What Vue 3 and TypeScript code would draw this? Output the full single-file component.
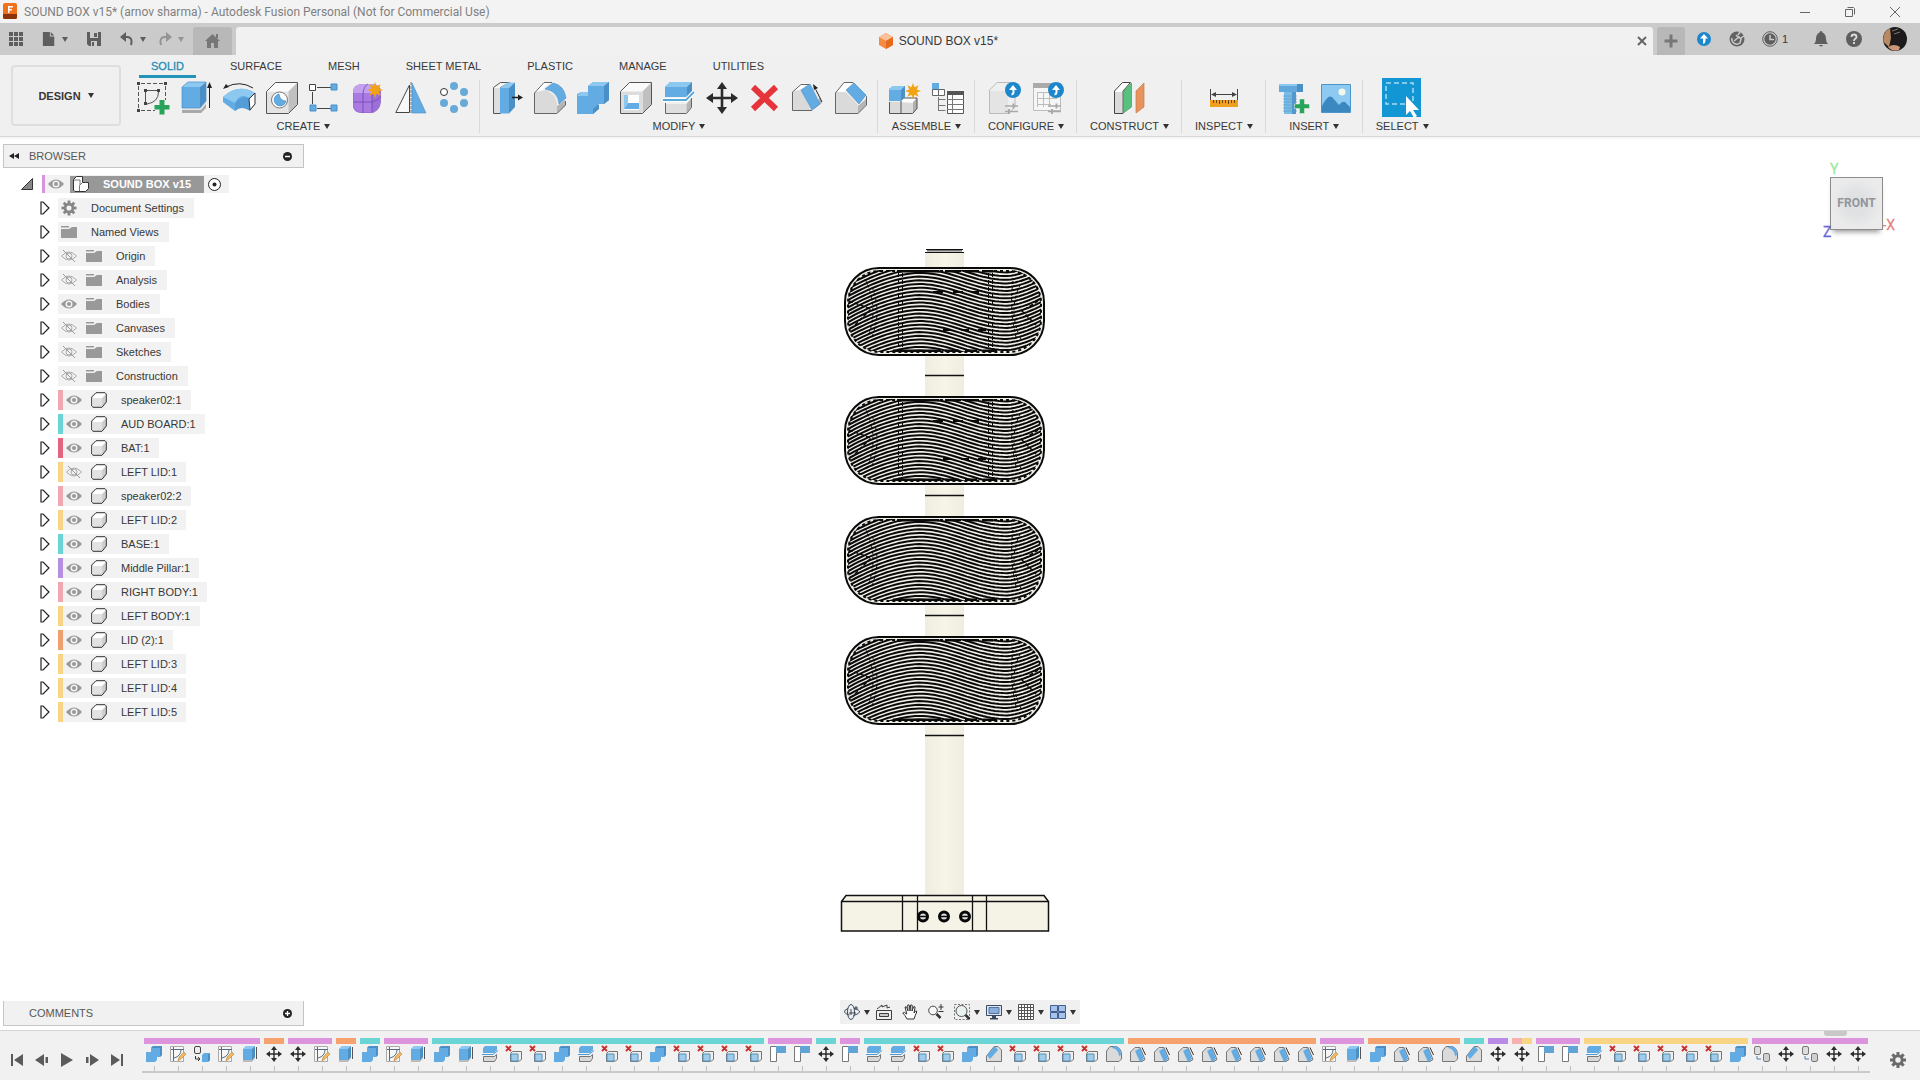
<script setup lang="ts">
import { ref } from 'vue'

const blue = '#62abe3'
const light = '#8cc8f0'
const deep = '#4a8fc6'

const star = (x: number, y: number, r: number): string => {
  const pts: string[] = []
  for (let i = 0; i < 16; i++) {
    const a = (Math.PI * i) / 8
    const q = i % 2 ? r * 0.5 : r
    pts.push(`${(x + q * Math.sin(a)).toFixed(1)},${(y - q * Math.cos(a)).toFixed(1)}`)
  }
  return `<polygon points="${pts.join(' ')}" fill="#f3a312"/>`
}

const gearPath = (c: number, r: number): string => {
  let teeth = ''
  for (let i = 0; i < 8; i++) {
    teeth += `<rect x="${c - r * 0.19}" y="${c - r}" width="${r * 0.38}" height="${r * 0.5}" transform="rotate(${i * 45} ${c} ${c})"/>`
  }
  return `${teeth}<circle cx="${c}" cy="${c}" r="${r * 0.52}" fill="none" stroke-width="${r * 0.36}" stroke="currentColor"/>`
}

const arrowUp = '<circle cx="24" cy="8" r="8" fill="#1d87cc"/><path d="M24 3l4 5h-2.500v2q0 3-3 3.500v-2q1-.5 1-1.500v-2H20z" fill="#fff"/>'
const sliders = '<path d="M16 24h13M16 29.500h13" stroke="#a9a9a9" stroke-width="1.500"/><path d="M24.500 21.500v5M20 27v5" stroke="#a9a9a9" stroke-width="2"/>'

const icons: Record<string, string> = {
  sketch: `<path d="M4 1.500h22M1.500 4v22M28.500 4v14M4 28.500h14" stroke="#555" stroke-dasharray="4 2" fill="none"/><g fill="#444"><path d="M0 0h3v3H0zM27 0h3v3h-3zM0 27h3v3H0zM7 7h3v3H7zM20 7h3v3h-3zM7 20h3v3H7z"/></g><path d="M10 8.500h10M8.500 10v10M21.500 10q0 10-11.500 12" fill="none" stroke="#555"/><path d="M22.500 18h5v5h5v4.500h-5v5h-5v-5h-5V23h5z" fill="#28a35a"/>`,
  extrude: `<path d="M2 26v5h19l5-5v-4z" fill="#a9a9a9"/><path d="M2 24v4h19l5-6v-3z" fill="#e5e5e5"/><path d="M2 5h18v21H2z" fill="${blue}"/><path d="M2 5l6-5h18l-6 5z" fill="${light}"/><path d="M20 5l6-5v19l-6 7z" fill="${deep}"/><path d="M2 5l6-5h18v19l-6 7H2z" fill="none" stroke="#4a8fc6" stroke-width=".7"/><path d="M29.500 26V5" stroke="#222"/><path d="M29.500 0l2.500 6h-5z" fill="#222"/>`,
  sweep: `<path d="M0 15q15-14 32-4v11l-5 7q-9-6-15 0L0 20z" fill="${blue}"/><path d="M0 15q15-14 32-4l-6 5q-9-6-14 5z" fill="${light}"/><path d="M12 21q7-8 14-5v12q-8-5-14 1z" fill="#559dd6"/><path d="M26 17l6-6v11l-5 6z" fill="#fff" stroke="#333"/><path d="M3 5q14-7 27 1" fill="none" stroke="#222"/><path d="M0 7l3-5 3 3z" fill="#222"/>`,
  hole: `<path d="M.5 9.500h22v22H.5z" fill="#e4e4e4"/><path d="M.5 9.500l9-9h22l-9 9z" fill="#fafafa"/><path d="M22.500 9.500l9-9v22l-9 9z" fill="#c0c0c0"/><path d="M.5 9.500l9-9h22v22l-9 9H.5z" fill="none" stroke="#555"/><circle cx="13.500" cy="18" r="8" fill="#fff" stroke="#777"/><path d="M13 12a6 6 0 1 0 7 7q-6 0-7-7z" fill="${blue}" stroke="#3d84bd" stroke-width=".6"/>`,
  pattern: `<path d="M8 5.500h14M8 26.500h14M3.500 10v12" stroke="#444"/><path d="M.5 2.500h6v6h-6z" fill="#fff" stroke="#444"/><path d="M22 2h6v6h-6zM1 23h6v6H1zM22 23h6v6h-6z" fill="${blue}" stroke="#4a8fc6"/>`,
  form: `<path d="M1 10Q1 3 9 2h12q8 1 8 8v10q-1 8-8 11H8q-6-1-7-6z" fill="#9a6fd6"/><path d="M1 10Q1 3 9 2h12q5 1 7 4-6 1-8 5H2z" fill="#c3a1ee"/><path d="M2 11h18v19H8q-5-1-6-5z" fill="#a97ae2"/><path d="M11 11V31M2 20h18q7-2 9-6M20 11v19M11 11q1-7 5-9" stroke="#7346ae" fill="none" stroke-width=".8"/>${star(23, 8, 8)}`,
  mirror: `<path d="M.8 30.500L14.500 3v27.500z" fill="#f8f8f8" stroke="#444"/><path d="M17 1l14 30H17z" fill="${blue}" stroke="#4a8fc6" stroke-width=".6"/><path d="M16 0v32" stroke="#777" stroke-dasharray="3 1"/>`,
  circular: `<g fill="#68a9d8"><circle cx="16" cy="4" r="4"/><circle cx="26" cy="10" r="4"/><circle cx="26" cy="21" r="4"/><circle cx="16" cy="27" r="4"/><circle cx="6" cy="21" r="4"/></g><circle cx="6" cy="10" r="3.500" fill="#fff" stroke="#333"/>`,
  presspull: `<path d="M2.500 5.500l7-5h9l-9 5v26h-7z" fill="#f7f7f7" stroke="#555"/><path d="M3 6h7v25H3z" fill="#dedede"/><path d="M9 6h9v25.500H9z" fill="${blue}"/><path d="M9 6l7-5.500h8L18 6z" fill="${light}"/><path d="M18 6l6-5.500V25l-6 6.500z" fill="${deep}"/><path d="M21 15.500h6" stroke="#222" stroke-width="1.500"/><path d="M32 15.500l-5-3v6z" fill="#222"/>`,
  fillet: `<path d="M.5 10L9 .5h8q-8 4-9 9.500z" fill="#fff"/><path d="M.5 31.500V10L12 8q10 4 11 14v9.500z" fill="#dadada"/><path d="M23 24l8-6v6l-8 7.500z" fill="#b5b5b5"/><path d="M23 31.500H.5V11L10 .5h8M31.500 19v4L23 31.500" fill="none" stroke="#666"/><path d="M11 7l8-6q11 2 13 15l-7 6Q24 9 11 7z" fill="${blue}" stroke="#4a8fc6" stroke-width=".6"/>`,
  combine: `<path d="M0 12l4-2h7V4l5-4h16v18l-5 4h-6v5l-5 5H0z" fill="${blue}"/><path d="M11 4l5-4h16l-5 4zM0 14l4-4h7v4z" fill="${light}"/><path d="M27 4l5-4v18l-5 4zM16 27l6-5v5l-6 5z" fill="${deep}"/>`,
  shell: `<path d="M.5 9.500l9-9h22v22l-9 9H.5z" fill="#fafafa"/><path d="M22.500 9.500l9-9v22l-9 9z" fill="#c0c0c0"/><path d="M.5 9.500h22v22H.5z" fill="#dcdcdc"/><path d="M4 13h15v15H4z" fill="#fff"/><path d="M4 13h4v8l-4 6z" fill="#8cc8f0"/><path d="M4 27l4-6h11v6z" fill="${blue}"/><path d="M.5 9.500l9-9h22v22l-9 9H.5z" fill="none" stroke="#555"/>`,
  split: `<path d="M2 5l5-5h22l-5 5v10H2z" fill="${blue}"/><path d="M2 5l5-5h22l-5 5z" fill="${light}"/><path d="M24 5l5-5v9l-5 6z" fill="${deep}"/><path d="M2.500 22h21v9h-21z" fill="#dedede"/><path d="M23.500 22l5-6v9l-5 6z" fill="#b5b5b5"/><path d="M2.500 21v10.500h21l5-6V16" fill="none" stroke="#666"/><path d="M0 18h23l8-8" fill="none" stroke="#fff" stroke-width="4"/><path d="M0 18h23l8-8" fill="none" stroke="#58a8e0" stroke-width="1.800"/>`,
  move: `<path d="M16 4v24M4 16h24" stroke="#2b2b2b" stroke-width="2.600"/><path d="M16 0l5 7H11zM16 32l5-7H11zM0 16l7-5v10zM32 16l-7-5v10z" fill="#2b2b2b"/>`,
  remove: `<path d="M4 5l23 22M27 5L4 27" stroke="#e5343a" stroke-width="6"/>`,
  draft: `<path d="M.5 10L9 1.500h8l-7 5z" fill="#fff"/><path d="M.5 28.500V9l9-1 10 20.500z" fill="#dadada"/><path d="M20 28.500L30 21l-2-6z" fill="#b5b5b5"/><path d="M20 28.500H.5V10L9 2.500h8" fill="none" stroke="#666"/><path d="M9 8l9-6 10 20-8 6z" fill="${blue}" stroke="#4a8fc6" stroke-width=".6"/><path d="M30 20L22.500 5" stroke="#222" stroke-dasharray="14 1"/><path d="M21 2l5 4-4 2z" fill="#222"/>`,
  chamfer: `<path d="M.5 11L9 .5h9l-7 9z" fill="#fff"/><path d="M.5 31.500V10h10l13 13v8.500z" fill="#dadada"/><path d="M23 24l8-7v6l-8 8.500z" fill="#b5b5b5"/><path d="M23 31.500H.5V11L9 .5h9l13.500 14V23z" fill="none" stroke="#666"/><path d="M11 8l8-7 12 12-7 9z" fill="${blue}" stroke="#4a8fc6" stroke-width=".6"/>`,
  component: `<path d="M.5 20V31.500h24V20z" fill="#dadada"/><path d="M12 20l3-4h12l-3 5z" fill="#fff"/><path d="M24 20l4-4v11l-4 4.500z" fill="#b0b0b0"/><path d="M.5 20v11.500h23l4.500-5V16H14M12 19v12" fill="none" stroke="#555"/><path d="M0 7l4-3h12v11l-4 4H0z" fill="${blue}"/><path d="M0 8l4-4h12l-4 4z" fill="${light}"/><path d="M12 8l4-4v11l-4 4z" fill="${deep}"/>${star(24, 9, 8)}`,
  table: `<path d="M0 1h7v7H0z" fill="${blue}"/><path d="M.5 7.500h6v6h-6zM6.500 7.500h6v6h-6z" fill="#fff" stroke="#666"/><path d="M6.500 15v14M6.500 17.500h7M6.500 23.500h7M6.500 28.500h7" stroke="#777" fill="none"/><path d="M15.500 10.500h16v21h-16z" fill="#fff" stroke="#555"/><path d="M15 9h17v4H15z" fill="#555"/><path d="M20.500 13v18M15 17.500h17M15 22.500h17M15 27.500h17" stroke="#777"/>`,
  configure: `<path d="M.5 31.500V8L8 .5h18v24l-6 7z" fill="#efefef" stroke="#bcbcbc"/><path d="M1 9h18v22H1z" fill="#e4e4e4"/>${arrowUp}${sliders}`,
  configtable: `<path d="M1.500 1.500h27v27h-27z" fill="#f6f6f6" stroke="#bcbcbc"/><path d="M1 1h28v5H1z" fill="#aaa"/><path d="M5 10.500h20M5 16.500h20M5 22.500h14M5.500 10v15M11.500 10v15M17.500 10v15" stroke="#bdbdbd"/>${arrowUp}${sliders}`,
  plane: `<path d="M.5 9l8-8.500h8L9 9v22.500H.5z" fill="#fff" stroke="#444"/><path d="M1 10h7v21H1z" fill="#dadada"/><path d="M9.500 9l8-8v24l-8 6z" fill="#59c17f" stroke="#3d9c60" stroke-width=".7"/><path d="M22 9l8-8v24l-8 6z" fill="#e6935e" stroke="#cf7a44" stroke-width=".7"/>`,
  inspect: `<path d="M2.500 7v11M29.500 7v11M5 12.500h22" stroke="#444"/><path d="M3 12.500l5-2.500v5zM29 12.500l-5-2.500v5z" fill="#444"/><path d="M2 18h28v7H2z" fill="#f0a01e"/><path d="M5.500 18v3M8.500 18v3M11.500 18v4M14.500 18v3M17.500 18v3M20.500 18v4M23.500 18v3M26.500 18v3" stroke="#6a4508"/>`,
  bolt: `<path d="M2 2h24v8H2z" fill="#62a8da"/><path d="M2 2h24v2H2z" fill="${light}"/><path d="M20 2h6v8h-6z" fill="${deep}"/><path d="M7 10h11v22H7z" fill="#79bce8"/><path d="M15 10h4v22h-4z" fill="#4f97cd"/><path d="M6 14h14M6 17h14M6 20h14M6 23h14M6 26h14M6 29h14" stroke="#5f9cc8" stroke-width=".8"/><path d="M22.500 17h5v5h5v4.500h-5v5h-5v-5h-5V22h5z" fill="#28a35a" stroke="#f0f0f0" stroke-width=".5"/>`,
  picture: `<path d="M1.500 2.500h29v28h-29z" fill="#8ec9f2" stroke="#4a95cc"/><circle cx="22" cy="10" r="3.500" fill="#f4f8e8"/><path d="M2 24q6-12 10-9l7 8q3-4 6-3l5 5v5H2z" fill="#3b87bf"/>`,
  select: `<path d="M-4-4h39v39H-4z" fill="#1296d4"/><path d="M0 1h27v21H0z" fill="none" stroke="#a8dcf2" stroke-width="1.500" stroke-dasharray="5 3"/><path d="M20 14v19l4-4 4 7 3-2-4-6h6z" fill="#fff"/>`,
}

// Small glyphs of the timeline, drawn on a 16px grid.
const marks: Record<string, string> = {
  combine: `<path d="M0 6h5V2l2-2h9v9l-2 2h-3v3l-2 2H0z" fill="${blue}"/><path d="M5 2l2-2h9l-2 2zM14 2l2-2v9l-2 2z" fill="${deep}"/>`,
  sketch: `<path d="M.5.500h13v15H.5z" fill="#f6f6f6" stroke="#aaa"/><path d="M3.500 1v14M1 3.500h13M11 4q0 6-7 8" stroke="#556b80" fill="none"/><path d="M8 15l1-4 5-5 2 2-5 5z" fill="#f0b860" stroke="#b5722a" stroke-width=".5"/>`,
  joint: `<rect x=".5" y=".5" width="6" height="7" rx="1.500" fill="#eee" stroke="#444"/><path d="M1.500 10v3h4M4 11l2 2-2 2" stroke="#333" fill="none"/><path d="M8 9l2-2h6v7l-2 2H8z" fill="${blue}"/><path d="M14 9l2-2v7l-2 2z" fill="${deep}"/>`,
  extrude: `<path d="M1 3l3-3h9v12l-3 4H1z" fill="#bbb"/><path d="M1 3h9v11H1z" fill="${blue}"/><path d="M1 3l3-3h9l-3 3z" fill="${light}"/><path d="M10 3l3-3v11l-3 3z" fill="${deep}"/><path d="M14.500 13V1" stroke="#555"/>`,
  move: `<path d="M8 2v12M2 8h12" stroke="#2b2b2b" stroke-width="1.400"/><path d="M8 0l3 4H5zM8 16l3-4H5zM0 8l4-3v6zM16 8l-4-3v6z" fill="#2b2b2b"/>`,
  split: `<path d="M1 2l2-2h12v4l-3 3H1z" fill="${blue}"/><path d="M0 8.500h11l5-4" stroke="#4d9bd3" fill="none"/><path d="M1.500 10.500h11l2-2v4l-2 3h-11z" fill="#d8d8d8" stroke="#777"/>`,
  remove: `<path d="M0 0l5 5M5 0L0 5" stroke="#c4302c" stroke-width="1.800"/><path d="M4.500 7.500l2-2h9v8l-3 2h-8z" fill="#eee" stroke="#777"/><path d="M5 8h7v7H5z" fill="#9fcdee" stroke="#5a8fb5"/>`,
  plane: `<path d="M.5.500h6v15h-6z" fill="#fff" stroke="#777"/><path d="M6 0h10v7H6z" fill="#62a3d6"/>`,
  chamfer: `<path d="M.5 15.500V10L8 .500h4L15.500 4v11.500z" fill="#dcdcdc" stroke="#777"/><path d="M1 9l8-9 3 4-8 9z" fill="${blue}"/>`,
  fillet: `<path d="M.5 15.500V5L4 .5h6Q15 2 15.500 8v5L13 15.500z" fill="#dadada" stroke="#777"/><path d="M5 2q7 0 8 8l2-1Q15 1 9 0z" fill="${blue}"/>`,
  draft: `<path d="M.5 15.500V6L5 1.500h5l5 12-3 2z" fill="#dcdcdc" stroke="#777"/><path d="M5 5l5-3 4 11-4 3z" fill="${blue}"/><path d="M15.500 9L12 1.500" stroke="#333"/>`,
  link: `<rect x=".5" y=".5" width="6" height="8" rx="1.500" fill="#ddd" stroke="#777"/><rect x="9.500" y="7.500" width="6" height="8" rx="1.500" fill="#d0d0d0" stroke="#777"/><path d="M3 10v3h4" stroke="#4a80b0" fill="none"/>`,
}

interface Group { label: string; tools: string[] }
const groups: Group[] = [
  { label: 'CREATE', tools: ['sketch', 'extrude', 'sweep', 'hole', 'pattern', 'form', 'mirror', 'circular'] },
  { label: 'MODIFY', tools: ['presspull', 'fillet', 'combine', 'shell', 'split', 'move', 'remove', 'draft', 'chamfer'] },
  { label: 'ASSEMBLE', tools: ['component', 'table'] },
  { label: 'CONFIGURE', tools: ['configure', 'configtable'] },
  { label: 'CONSTRUCT', tools: ['plane'] },
  { label: 'INSPECT', tools: ['inspect'] },
  { label: 'INSERT', tools: ['bolt', 'picture'] },
  { label: 'SELECT', tools: ['select'] },
]

const tabs = ['SOLID', 'SURFACE', 'MESH', 'SHEET METAL', 'PLASTIC', 'MANAGE', 'UTILITIES']
const activeTab = ref('SOLID')

const rose = '#f0a8b0'
const teal = '#6bd5d5'
const sand = '#f8d585'
const pink = '#dc94dc'
const orange = '#f6a26f'

interface Row { name: string; kind: 'setup' | 'views' | 'folder' | 'part'; shown?: boolean; color?: string }
const rows: Row[] = [
  { name: 'Document Settings', kind: 'setup' },
  { name: 'Named Views', kind: 'views' },
  { name: 'Origin', kind: 'folder' },
  { name: 'Analysis', kind: 'folder' },
  { name: 'Bodies', kind: 'folder', shown: true },
  { name: 'Canvases', kind: 'folder' },
  { name: 'Sketches', kind: 'folder' },
  { name: 'Construction', kind: 'folder' },
  { name: 'speaker02:1', kind: 'part', shown: true, color: rose },
  { name: 'AUD BOARD:1', kind: 'part', shown: true, color: teal },
  { name: 'BAT:1', kind: 'part', shown: true, color: '#e3647c' },
  { name: 'LEFT LID:1', kind: 'part', color: sand },
  { name: 'speaker02:2', kind: 'part', shown: true, color: rose },
  { name: 'LEFT LID:2', kind: 'part', shown: true, color: sand },
  { name: 'BASE:1', kind: 'part', shown: true, color: teal },
  { name: 'Middle Pillar:1', kind: 'part', shown: true, color: '#b78fe0' },
  { name: 'RIGHT BODY:1', kind: 'part', shown: true, color: rose },
  { name: 'LEFT BODY:1', kind: 'part', shown: true, color: sand },
  { name: 'LID (2):1', kind: 'part', shown: true, color: '#f0a070' },
  { name: 'LEFT LID:3', kind: 'part', shown: true, color: sand },
  { name: 'LEFT LID:4', kind: 'part', shown: true, color: sand },
  { name: 'LEFT LID:5', kind: 'part', shown: true, color: sand },
]

interface Span { color: string; steps: string[] }
const span = (color: string, list: string): Span => ({ color, steps: list.split(' ') })
const timeline: Span[] = [
  span(pink, 'combine sketch joint sketch extrude'),
  span(orange, 'move'),
  span(pink, 'move sketch'),
  span(orange, 'extrude'),
  span(teal, 'combine'),
  span(pink, 'sketch extrude'),
  span(teal, 'combine extrude split remove remove combine split remove remove combine remove remove remove remove'),
  span(pink, 'plane plane'),
  span(teal, 'move'),
  span(pink, 'plane'),
  span(teal, 'split split remove remove combine chamfer remove remove remove remove fillet'),
  span(orange, 'draft draft draft draft draft draft draft draft'),
  span(pink, 'sketch extrude'),
  span(orange, 'combine draft draft fillet'),
  span(teal, 'chamfer'),
  span('#b98be6', 'move'),
  span('linear-gradient(90deg, #f6b0b0 50%, #f8d585 50%)', 'move'),
  span(pink, 'plane plane'),
  span(sand, 'split remove remove remove remove remove combine'),
  span(pink, 'link move link move move'),
]

const eyeOpen = '<path d="M0 8Q8-1 16 8 8 17 0 8z" fill="#999"/><circle cx="8" cy="8" r="3.500" fill="#f2f2f2"/><circle cx="8" cy="8" r="2" fill="#999"/>'
const eyeShut = '<path d="M.5 8Q8 0 15.500 8 8 16 .5 8z" fill="none" stroke="#aaa"/><circle cx="8" cy="8" r="3" fill="none" stroke="#aaa"/><path d="M2 2l12 12" stroke="#999"/>'
const folder = '<path d="M0 2h8v1.500H0zM0 5h8l3-2h5v11H0z" fill="#999"/>'
const cube = '<path d="M1 6l5-4.500h9v9L11.500 15H1z" fill="#fff"/><path d="M2 6h9v9H2z" fill="#e2e2e2"/><path d="M11 6l4-4v9l-4 4z" fill="#cfcfcf"/><path d="M.7 14V5L5 .7h9l1.300 1.300v8L11 15.300H2z" fill="none" stroke="#333"/>'

interface NavTool { name: string; art: string; menu?: boolean }
const navTools: NavTool[] = [
  { name: 'Orbit', menu: true, art: '<ellipse cx="7" cy="8" rx="3.500" ry="7.500" fill="none" stroke="#3d4b5c"/><path d="M4 4.500Q0 6 .5 8t5 3M10 4.500q6 1.500 5.500 3.500t-6 3.500M7 5v6M5 9h7M12 2v4M10 4h4" fill="none" stroke="#3d4b5c"/>' },
  { name: 'Look at', art: '<path d="M1 5l5-4v2l5-2v3l3-1M.5 6.500h15v9H.5z" fill="none" stroke="#3f3f3f"/><path d="M3.500 9.500h9v3h-9z" fill="#ccc" stroke="#3f3f3f"/>' },
  { name: 'Pan', art: '<path d="M5 15Q3 11 .8 9q1-1.500 4 1L3 3q1.500-1 2 1l1 3-.3-6q1.500-.8 1.800 1L8 7l.7-6q1.600-.5 1.600 1L10 7l1.800-4.500q1.700 0 1.200 1.500l-1 5 1.500-2q1.500-.5 1.200 1Q13 12 12 15z" fill="#fff" stroke="#333"/>' },
  { name: 'Zoom', art: '<circle cx="5" cy="6.500" r="4.300" fill="#f8f8f8" stroke="#444"/><path d="M8.500 10l4 4" stroke="#333" stroke-width="2.500"/><path d="M13 0v6M10.500 3h5M10.500 7.500h5" stroke="#333"/>' },
  { name: 'Fit', menu: true, art: '<path d="M.5.500h15v15H.5z" fill="none" stroke="#777" stroke-dasharray="2 1.500"/><circle cx="7.500" cy="7" r="5.500" fill="#e9f1f1" stroke="#555"/><path d="M11.500 11l4 4" stroke="#333" stroke-width="2.500"/>' },
  { name: 'Display settings', menu: true, art: '<path d="M.5 1.500h15v10H.5z" fill="#dfe5ee" stroke="#3b4a63"/><path d="M3 3.500h10v6H3z" fill="#8caedd" stroke="#5274a8"/><path d="M6 12h4v2H6zM4 14h8v1.500H4z" fill="#3b4a63"/>' },
  { name: 'Grid and snaps', menu: true, art: '<path d="M.5.500h15v15H.5zM3.500 0v16M6.500 0v16M9.500 0v16M12.500 0v16M0 3.500h16M0 6.500h16M0 9.500h16M0 12.500h16" fill="#fff" stroke="#555"/>' },
  { name: 'Viewports', menu: true, art: '<path d="M.5 1.500h7v6h-7zM8.500 1.500h7v6h-7zM.5 8.500h7v6h-7zM8.500 8.500h7v6h-7z" fill="#a9c3e8" stroke="#3f5f93"/>' },
]

const players = [
  { name: 'Go to start', art: '<path d="M1 1h2v12H1zM13 1v12L4 7z"/>' },
  { name: 'Step back', art: '<path d="M9 1v12L0 7zM10.500 4H13v6h-2.500z"/>' },
  { name: 'Play', art: '<path d="M1 0v14l12-7z"/>' },
  { name: 'Step forward', art: '<path d="M5 1v12l9-6zM1 4h2.500v6H1z"/>' },
  { name: 'Go to end', art: '<path d="M11 1h2v12h-2zM1 1v12l9-6z"/>' },
]

// Grille of one speaker: each rib climbs to a crest at 74, sinks to a trough at 162 and climbs again.
const ribDepth = (x: number): number => {
  if (x < 74) return 24 * Math.pow((74 - x) / 72, 1.7)
  if (x < 162) return 9 - 9 * Math.cos((Math.PI * (x - 74)) / 88)
  return 18 - 12 * Math.pow((x - 162) / 36, 1.6)
}
const ribs: string[] = []
for (let i = 0; i < 30; i++) {
  const base = -20 + i * 3.7
  let d = ''
  for (let x = 2; x <= 198; x += 4) {
    d += `${x === 2 ? 'M' : 'L'}${x} ${(base + ribDepth(x)).toFixed(1)}`
  }
  ribs.push(d)
}
const speakers = [
  { y: 267, bands: true },
  { y: 396, bands: true },
  { y: 516, bands: false },
  { y: 636, bands: false },
]
const seams = [375, 495, 615, 735]
</script>

<template>
  <div class="app">
    <header class="titlebar">
      <svg class="logo" viewBox="0 0 16 17"><rect width="14" height="16" x="1" rx="2" fill="#f0701c" /><path d="M1 11h14v4l-1 1H2l-1-1z" fill="#8a3408" /><path d="M6 3h5v1.500H7.500v1.500H10v1.500H7.500V10H6z" fill="#fff" /></svg>
      <span class="title">SOUND BOX v15* (arnov sharma) - Autodesk Fusion Personal (Not for Commercial Use)</span>
      <div class="window-buttons">
        <button aria-label="Minimize"><svg viewBox="0 0 10 10"><path d="M0 5.500h10" /></svg></button>
        <button aria-label="Restore"><svg viewBox="0 0 10 10"><path d="M.5 2.500h7v7h-7zM2.500.500h6l1 1v6" /></svg></button>
        <button aria-label="Close"><svg viewBox="0 0 10 10"><path d="M0 0l10 10M10 0L0 10" /></svg></button>
      </div>
    </header>

    <div class="tabbar">
      <div class="quick">
        <button aria-label="Data panel"><svg class="q" viewBox="0 0 14 14"><path d="M0 0h4v4H0zM5 0h4v4H5zM10 0h4v4h-4zM0 5h4v4H0zM5 5h4v4H5zM10 5h4v4h-4zM0 10h4v4H0zM5 10h4v4H5zM10 10h4v4h-4z" fill="#5e5e5e" /></svg></button>
        <button class="with-menu" aria-label="File"><svg class="q" viewBox="0 0 14 16"><path d="M0 0h8v5h5v11H0zM9 0l4 4H9z" fill="#5e5e5e" /></svg><i class="caret"></i></button>
        <button aria-label="Save"><svg class="q" viewBox="0 0 14 14"><path d="M0 0h14v14H2l-2-2z" fill="#5e5e5e" /><path d="M3 0h8v6H3zM4 9h6v5H4z" fill="#cbcbcb" /><path d="M7 1h3v4H7zM5 10h2v4H5z" fill="#5e5e5e" /></svg></button>
        <button class="with-menu" aria-label="Undo"><svg class="q" viewBox="0 0 14 14"><path d="M3 5h5q5 1 3 8" fill="none" stroke="#5e5e5e" stroke-width="2" /><path d="M0 5l6-5v10z" fill="#5e5e5e" /></svg><i class="caret"></i></button>
        <button class="with-menu faded" aria-label="Redo"><svg class="q" viewBox="0 0 14 14"><path d="M11 5H6Q1 6 3 13" fill="none" stroke="#5e5e5e" stroke-width="2" /><path d="M14 5L8 0v10z" fill="#5e5e5e" /></svg><i class="caret"></i></button>
      </div>
      <button class="home" aria-label="Home"><svg viewBox="0 0 15 14"><path d="M7.500 0L15 7h-2v7H9V9H6v5H2V7H0zM11 0h2v4h-2z" fill="#777" /></svg></button>
      <div class="doc-tab">
        <svg viewBox="0 0 14 16"><path d="M7 0l7 4v8l-7 4-7-4V4z" fill="#f58a42" /><path d="M7 0l7 4-7 4-7-4z" fill="#fac09a" /><path d="M14 4v8l-7 4V8z" fill="#e56a1c" /></svg>
        <span>SOUND BOX v15*</span>
        <button class="doc-close" aria-label="Close document"><svg viewBox="0 0 10 10"><path d="M1 1l8 8M9 1L1 9" stroke="#666" stroke-width="2" /></svg></button>
      </div>
      <button class="plus" aria-label="New tab"><svg viewBox="0 0 14 14"><path d="M7 .5v13M.5 7h13" stroke="#777" stroke-width="3" /></svg></button>
      <div class="status">
        <button aria-label="Updates"><svg viewBox="0 0 16 16"><circle cx="8" cy="8" r="7" fill="#1d87cc" /><path d="M8 3l4 4.500H9.500V10q0 2.500-2.500 3v-5.500H4z" fill="#fff" /></svg></button>
        <button aria-label="Extensions"><svg viewBox="0 0 16 16"><circle cx="8" cy="8" r="7.500" fill="#626262" /><path d="M3 7a5 5 0 0 0 8 5l1-4-2-2-5 4M7 4l3 3M11 1L9 4M15 5l-3 2" fill="none" stroke="#cbcbcb" stroke-width="1.500" /></svg></button>
        <button class="jobs" aria-label="Job status"><svg viewBox="0 0 16 16"><circle cx="8" cy="8" r="7.300" fill="none" stroke="#5e5e5e" /><circle cx="8" cy="8" r="5.700" fill="#5e5e5e" /><path d="M8 4v4.500h4" fill="none" stroke="#cbcbcb" stroke-width="1.500" /></svg><span>1</span></button>
        <button aria-label="Notifications"><svg viewBox="0 0 16 16"><path d="M8 0q1.500 0 1.500 1.500Q13 3 13 8q0 3 2 5H1q2-2 2-5 0-5 3.500-6.500Q6.500 0 8 0zM6 14h4q-2 3-4 0z" fill="#5e5e5e" /></svg></button>
        <button aria-label="Help"><svg viewBox="0 0 16 16"><circle cx="8" cy="8" r="8" fill="#5e5e5e" /><path d="M5.500 6q0-2.500 2.500-2.500T10.500 6Q10.500 7 9 8q-1 .7-1 2M8 11v2" fill="none" stroke="#ddd" stroke-width="1.800" /></svg></button>
        <button class="avatar" aria-label="Account"><svg viewBox="0 0 24 24"><circle cx="12" cy="12" r="12" fill="#1d1a1c" /><path d="M7 1Q-1 6 .5 15L6 20l2-9z" fill="#b98a62" /><path d="M5 20q6-4 12 0l-1 3q-5 2-9-1z" fill="#c99678" /><path d="M9 4l6-2M11 7l6-2" stroke="#777" /></svg></button>
      </div>
    </div>

    <div class="ribbon">
      <div class="workspace"><button>DESIGN<i class="caret"></i></button></div>
      <div class="ribbon-main">
        <nav class="tabs">
          <button v-for="t in tabs" :key="t" :class="{ active: t === activeTab }" @click="activeTab = t">{{ t }}</button>
        </nav>
        <div class="groups">
          <section v-for="g in groups" :key="g.label" class="group">
            <div class="tools">
              <button v-for="t in g.tools" :key="t" :aria-label="t"><svg viewBox="0 0 32 32" v-html="icons[t]"></svg></button>
            </div>
            <button class="group-label">{{ g.label }}<i class="caret"></i></button>
          </section>
        </div>
      </div>
    </div>

    <main class="canvas">
      <svg class="model" viewBox="0 139 1920 891">
        <defs>
          <linearGradient id="pillar"><stop offset="0" stop-color="#f0ede0" /><stop offset=".5" stop-color="#f7f4e8" /><stop offset="1" stop-color="#f0ede0" /></linearGradient>
          <clipPath id="grille"><rect x="3" y="3" width="193" height="82" rx="32" /></clipPath>
        </defs>
        <rect x="925" y="252" width="39" height="643" fill="url(#pillar)" />
        <path d="M927 250.500h35" stroke="#777" stroke-width="2" />
        <path d="M926 249.500h37M925 252.500h39" stroke="#111" />
        <path v-for="s in seams" :key="s" :d="`M925 ${s}.5h39`" stroke="#111" stroke-width="1.500" />
        <g v-for="s in speakers" :key="s.y" :transform="`translate(845 ${s.y})`">
          <rect y="1" width="199" height="87" rx="34" fill="#f1efe8" stroke="#0a0a0a" stroke-width="2" />
          <g clip-path="url(#grille)" fill="none" stroke="#0a0a0a">
            <path v-for="(d, i) in ribs" :key="i" :d="d" stroke-width="2" />
            <path d="M20 12q16 32 0 64M27 20q10 24 0 50M178 12q-18 32 0 64M168 14q-4 30 4 60" stroke-dasharray="3 3" />
            <path d="M4 34l22 8-18 18M193 34l-16 10 14 14" stroke-dasharray="4 2" stroke-width="1.500" />
            <path v-if="s.bands" d="M53.500 6v76M57.500 6v76M143.500 6v76M147.500 6v76" stroke-dasharray="4 3" />
            <path v-if="s.bands" d="M88 25h10M108 25h10M126 25h8M98 63h8M116 63h8M133 63h8" stroke-width="2" />
            <path d="M52 4h42M100 4h14M120 4h12M138 4h10M48 84h48M100 84h14M120 84h12M138 84h14" stroke-width="3" />
          </g>
          <rect x="3" y="4" width="193" height="81" rx="32" fill="none" stroke="#0a0a0a" stroke-width="2" stroke-dasharray="3 3" />
        </g>
        <path d="M846 895.500h198l4.500 6v29.500h-207v-29.500z" fill="#f5f2e6" stroke="#111" stroke-width="1.500" />
        <path d="M841 901.500h207M902.500 896v35M917.500 896v35M972.500 896v35M986.500 896v35" stroke="#111" stroke-width="1.300" />
        <g v-for="x in [923, 944, 965]" :key="x"><circle :cx="x" cy="916.500" r="4.500" fill="#ddd" stroke="#080808" stroke-width="3" /><path :d="`M${x - 4} 916.500h8`" stroke="#080808" stroke-width="1.500" /></g>
      </svg>

      <div class="left">
        <section class="browser">
          <div class="panel-head">
            <svg class="collapse" viewBox="0 0 10 6"><path d="M5 0v6L0 3zM10 0v6L5 3z" fill="#222" /></svg>
            <span>BROWSER</span>
            <button aria-label="Collapse browser"><svg viewBox="0 0 9 9"><circle cx="4.500" cy="4.500" r="4.500" fill="#222" /><path d="M2 4.500h5" stroke="#fff" stroke-width="1.500" /></svg></button>
          </div>
          <div class="root-row">
            <svg class="root-arrow" viewBox="0 0 12 12"><path d="M11.500.500v11H.5z" fill="#888" stroke="#333" /></svg>
            <div class="root-body">
              <i class="stripe"></i>
              <svg class="i16" viewBox="0 0 16 16" v-html="eyeOpen"></svg>
              <div class="root-name">
                <svg class="i16" viewBox="0 0 16 16"><path d="M.5 14V3.500l3-3h6v6h3l3 0v6l-3 3H2z" fill="#fff" stroke="#333" /><path d="M6.500 15V9.500l3-3M1 4h6v5" fill="none" stroke="#777" /></svg>
                <span>SOUND BOX v15</span>
              </div>
              <svg class="target" viewBox="0 0 13 13"><circle cx="6.500" cy="6.500" r="6" fill="#fff" stroke="#222" /><circle cx="6.500" cy="6.500" r="2" fill="#222" /></svg>
            </div>
          </div>
          <div v-for="r in rows" :key="r.name" class="row">
            <svg class="arrow" viewBox="0 0 10 14"><path d="M1 1h2l6 6-6 6H1z" fill="#fff" stroke="#222" stroke-width="1.200" /></svg>
            <div class="row-body" :class="r.kind">
              <i v-if="r.color" class="tag" :style="{ background: r.color }"></i>
              <svg v-if="r.kind === 'folder' || r.kind === 'part'" class="i16" viewBox="0 0 16 16" v-html="r.shown ? eyeOpen : eyeShut"></svg>
              <svg v-if="r.kind === 'setup'" class="i16 gear" viewBox="0 0 16 16" v-html="gearPath(8, 7.5)"></svg>
              <svg v-else class="i16 glyph" viewBox="0 0 16 16" v-html="r.kind === 'part' ? cube : folder"></svg>
              <span>{{ r.name }}</span>
            </div>
          </div>
        </section>
        <section class="panel-head comments">
          <span>COMMENTS</span>
          <button aria-label="Expand comments"><svg viewBox="0 0 9 9"><circle cx="4.500" cy="4.500" r="4.500" fill="#222" /><path d="M2 4.500h5M4.500 2v5" stroke="#fff" stroke-width="1.300" /></svg></button>
        </section>
      </div>

      <div class="navbar">
        <button v-for="n in navTools" :key="n.name" :class="{ menu: n.menu }" :aria-label="n.name"><svg viewBox="0 0 16 16" v-html="n.art"></svg><i v-if="n.menu" class="caret"></i></button>
      </div>

      <div class="cube-area">
        <div class="viewcube">
          <button class="face">FRONT</button>
          <span class="axis y">Y</span>
          <span class="axis z">Z</span>
          <span class="axis x">-X</span>
        </div>
      </div>
    </main>

    <footer class="timeline">
      <div class="players">
        <button v-for="p in players" :key="p.name" :aria-label="p.name"><svg viewBox="0 0 14 14" fill="#5b5b5b" v-html="p.art"></svg></button>
      </div>
      <div class="track">
        <div v-for="(s, i) in timeline" :key="i" class="span">
          <i class="bar" :style="{ background: s.color }"></i>
          <div class="steps">
            <button v-for="(m, j) in s.steps" :key="j" :aria-label="m"><svg viewBox="0 0 16 16" v-html="marks[m]"></svg></button>
          </div>
        </div>
      </div>
      <button class="settings" aria-label="Timeline settings"><svg viewBox="0 0 16 16" fill="currentColor" v-html="gearPath(8, 8)"></svg></button>
      <i class="thumb"></i>
    </footer>
  </div>
</template>

<style>
body {
  margin: 0;
  background: #fff;
}
</style>

<style scoped>
.app {
  display: flex;
  flex-direction: column;
  min-height: 100vh;
  overflow: hidden;
  font: 11px/16px "Liberation Sans", Arial, sans-serif;
  color: #383838;
}
button {
  display: flex;
  align-items: center;
  justify-content: center;
  margin: 0;
  padding: 0;
  border: 0;
  background: none;
  color: inherit;
  font: inherit;
}
svg {
  display: block;
  flex: none;
  overflow: visible;
}
.caret {
  flex: none;
  border: 3px solid transparent;
  border-top: 5px solid #333;
  border-bottom: 0;
}

.titlebar {
  display: flex;
  align-items: center;
  height: 23px;
  background: #f3f3f3;
}
.logo {
  width: 16px;
  height: 17px;
  margin: 0 6px 0 2px;
}
.title {
  font: 12px/20px Roboto, sans-serif;
  color: #808080;
}
.window-buttons {
  display: flex;
  gap: 35px;
  margin: 0 20px 0 auto;
}
.window-buttons svg {
  width: 10px;
  height: 10px;
  fill: none;
  stroke: #666;
}

.tabbar {
  display: flex;
  align-items: stretch;
  height: 32px;
  background: #cbcbcb;
}
.quick {
  display: flex;
  align-items: center;
  gap: 19px;
  width: 184px;
  padding-left: 9px;
}
.quick .q {
  width: 14px;
  height: 14px;
}
.with-menu {
  gap: 6px;
}
.quick .caret {
  border-top-color: #5e5e5e;
}
.quick .faded {
  margin-left: -7px;
  opacity: .5;
}
.home {
  width: 39px;
  margin: 4px 4px 0 0;
  border-radius: 3px 3px 0 0;
  background: #b8b8b8;
}
.home svg {
  width: 15px;
  height: 14px;
}
.doc-tab {
  position: relative;
  display: flex;
  flex: 1;
  align-items: center;
  justify-content: center;
  gap: 6px;
  margin-top: 4px;
  padding-right: 12px;
  border-radius: 3px 3px 0 0;
  background: #f1f1f1;
  font-size: 12px;
}
.doc-tab svg {
  width: 14px;
  height: 16px;
}
.doc-tab .doc-close {
  position: absolute;
  top: 9px;
  right: 6px;
}
.doc-tab .doc-close svg {
  width: 10px;
  height: 10px;
}
.plus {
  width: 28px;
  margin: 4px 11px 0 4px;
  border-radius: 3px 3px 0 0;
  background: #b8b8b8;
}
.plus svg {
  width: 14px;
  height: 14px;
}
.status {
  display: flex;
  align-items: center;
  gap: 17px;
  padding-right: 13px;
}
.status svg {
  width: 16px;
  height: 16px;
}
.jobs {
  gap: 4px;
  margin-right: 8px;
}
.status .avatar {
  margin-left: 4px;
}
.status .avatar svg {
  width: 24px;
  height: 24px;
}

.ribbon {
  display: flex;
  height: 81px;
  border-bottom: 1px solid #d8d8d8;
  background: #f0f0f0;
  box-shadow: 0 2px 0 #f7f7f7;
}
.workspace {
  width: 137px;
}
.workspace button {
  box-sizing: border-box;
  gap: 7px;
  width: 110px;
  height: 61px;
  margin: 10px 0 0 11px;
  border: 2px solid #dedede;
  border-radius: 4px;
  font-weight: bold;
}
.tabs {
  display: flex;
  gap: 22px;
  margin-left: 2px;
}
.tabs button {
  height: 23px;
  box-sizing: border-box;
  padding: 2px 12px 0;
  border-bottom: 3px solid transparent;
}
.tabs .active {
  border-bottom-color: #2592b8;
  color: #1f8cb5;
  -webkit-text-stroke: 0.3px;
}
.groups {
  display: flex;
  margin-top: 2px;
}
.group {
  display: flex;
  flex-direction: column;
  align-items: center;
  gap: 4px;
  height: 51px;
  padding: 2px 10px 0 11px;
  border-right: 1px solid #d9d9d9;
}
.group:first-child {
  padding-left: 0;
  padding-right: 9px;
}
.group:last-child {
  border-right: 0;
}
.tools {
  display: flex;
  gap: 11px;
}
.tools svg {
  width: 32px;
  height: 32px;
}
.group-label {
  gap: 4px;
  padding: 0 2px;
}

.canvas {
  position: relative;
  display: grid;
  flex: 1;
  grid-template-columns: 1fr auto 1fr;
  margin-top: 2px;
  background: #fff;
}
.model {
  position: absolute;
  inset: 0;
  width: 100%;
  height: 100%;
}
.left {
  position: relative;
  display: flex;
  flex-direction: column;
  justify-content: space-between;
  width: 301px;
  padding: 5px 0 4px 3px;
}
.panel-head {
  display: flex;
  align-items: center;
  height: 22px;
  padding: 0 11px 0 5px;
  border: 1px solid #c4c4c4;
  background: #f1f1f1;
  color: #585858;
}
.panel-head span {
  flex: 1;
}
.panel-head svg {
  width: 9px;
  height: 9px;
}
.panel-head .collapse {
  width: 10px;
  height: 6px;
  margin-right: 10px;
}
.comments {
  height: 24px;
  padding-left: 25px;
  border-top: 0;
}
.root-row,
.row {
  display: flex;
  align-items: center;
  height: 20px;
  margin-top: 4px;
}
.root-row {
  margin-top: 6px;
  padding-left: 18px;
}
.root-arrow {
  width: 12px;
  height: 12px;
}
.root-body {
  display: flex;
  align-items: center;
  height: 18px;
  margin-left: 9px;
  padding-right: 8px;
  background: #f2f2f2;
}
.stripe {
  width: 3px;
  height: 18px;
  margin-right: 3px;
  background: #d594dc;
}
.i16 {
  width: 16px;
  height: 16px;
}
.root-name {
  display: flex;
  align-items: center;
  height: 17px;
  margin: 0 4px 0 6px;
  padding: 0 13px 0 3px;
  background: #989898;
  color: #fff;
  font-weight: bold;
}
.root-name span {
  margin-left: 14px;
}
.target {
  width: 13px;
  height: 13px;
}
.row {
  padding-left: 37px;
}
.arrow {
  width: 10px;
  height: 14px;
}
.row-body {
  display: flex;
  align-items: center;
  height: 20px;
  margin-left: 8px;
  padding: 0 10px 0 3px;
  background: #f2f2f2;
}
.row-body.part {
  padding: 0 9px 0 0;
}
.row-body span {
  margin-left: 14px;
}
.tag {
  width: 5px;
  height: 20px;
  margin-right: 3px;
}
.gear {
  color: #858585;
  fill: #858585;
}
.folder .glyph,
.part .glyph {
  margin-left: 9px;
}
.navbar {
  position: relative;
  display: flex;
  align-items: center;
  align-self: end;
  gap: 10px;
  height: 24px;
  margin-bottom: 6px;
  padding: 0 4px;
  background: #f0f0f0;
}
.navbar button {
  gap: 4px;
}
.navbar .menu {
  margin-right: -4px;
}
.navbar .menu:last-child {
  margin-right: 0;
}
.navbar svg {
  width: 16px;
  height: 16px;
}
.cube-area {
  position: relative;
  display: flex;
  justify-content: flex-end;
}
.viewcube {
  position: relative;
  width: 53px;
  height: 53px;
  margin: 38px 37px 0 0;
}
.face {
  box-sizing: border-box;
  width: 53px;
  height: 53px;
  padding-bottom: 1px;
  border: 1px solid #8c8c8c;
  background: radial-gradient(#dfe1e3 30%, #ebebeb 70%);
  box-shadow: 0 5px 5px -3px #999;
  color: #92969a;
  font: bold 12px/16px Roboto, sans-serif;
}
.axis {
  position: absolute;
  font: 14px/14px Roboto, sans-serif;
  -webkit-text-stroke: 0.3px;
}
.axis.y {
  top: -15px;
  left: 0;
  color: #98e89c;
}
.axis.z {
  bottom: -9px;
  left: -7px;
  color: #6868d8;
}
.axis.x {
  right: -12px;
  bottom: -2px;
  color: #e88080;
}

.timeline {
  position: relative;
  display: flex;
  height: 49px;
  border-top: 1px solid #d4d4d4;
  background: #f1f1f1;
}
.players {
  display: flex;
  align-items: center;
  gap: 11px;
  width: 132px;
  padding: 8px 0 0 10px;
}
.players svg {
  width: 14px;
  height: 14px;
}
.track {
  display: flex;
  height: 33px;
  padding-top: 7px;
  border-bottom: 2px solid #cacaca;
}
.bar {
  display: block;
  height: 6px;
  margin: 0 2px;
}
.steps {
  display: flex;
  padding-top: 2px;
}
.steps button {
  width: 24px;
  height: 25px;
  align-items: flex-start;
  background: linear-gradient(#c0c0c0, #c0c0c0) 12px 20px / 1px 5px no-repeat;
}
.steps svg {
  width: 16px;
  height: 16px;
}
.settings {
  margin: 8px 14px 0 auto;
  color: #6b6b6b;
}
.settings svg {
  width: 16px;
  height: 16px;
}
.thumb {
  position: absolute;
  top: 0;
  right: 73px;
  width: 23px;
  height: 5px;
  border-radius: 0 0 3px 3px;
  background: #c8c8c8;
}
</style>
